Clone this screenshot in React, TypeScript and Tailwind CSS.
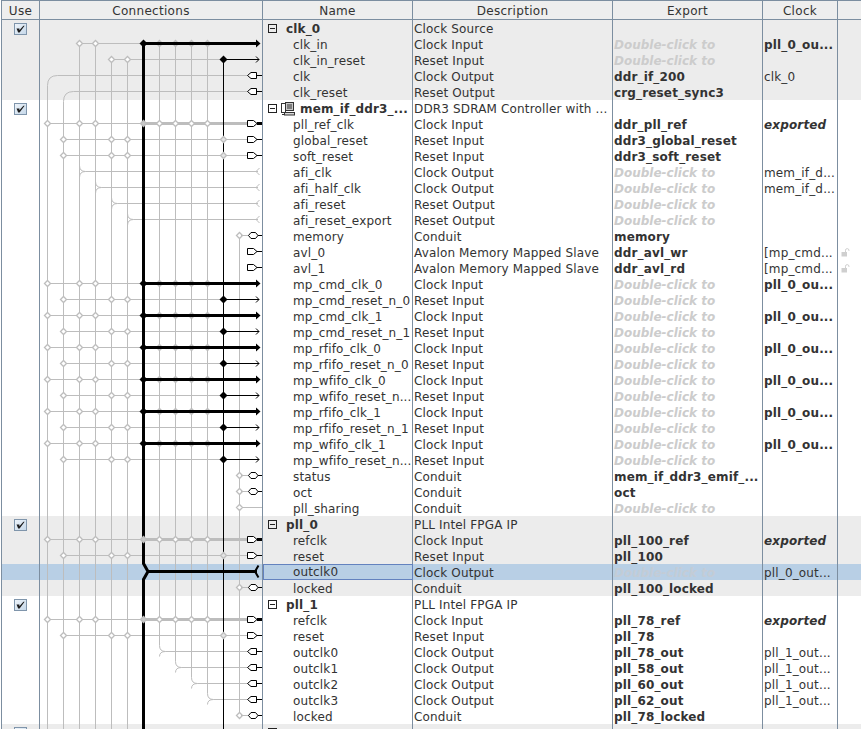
import React from "react";

type Row = {
  name: string;
  kind?: "group" | "mem";
  desc: string;
  exp?: string;
  clock?: string;
  clockStyle?: "b" | "x";
  lock?: boolean;
};

const DC = "@";
const P0 = "pll_0_ou...";

const clkIn = (name: string): Row => ({ name, desc: "Clock Input", exp: DC, clock: P0, clockStyle: "b" });
const rstIn = (name: string): Row => ({ name, desc: "Reset Input", exp: DC });

const rows: Row[] = [
  { name: "clk_0", kind: "group", desc: "Clock Source" },
  clkIn("clk_in"),
  rstIn("clk_in_reset"),
  { name: "clk", desc: "Clock Output", exp: "ddr_if_200", clock: "clk_0" },
  { name: "clk_reset", desc: "Reset Output", exp: "crg_reset_sync3" },
  { name: "mem_if_ddr3_...", kind: "mem", desc: "DDR3 SDRAM Controller with ..." },
  { name: "pll_ref_clk", desc: "Clock Input", exp: "ddr_pll_ref", clock: "exported", clockStyle: "x" },
  { name: "global_reset", desc: "Reset Input", exp: "ddr3_global_reset" },
  { name: "soft_reset", desc: "Reset Input", exp: "ddr3_soft_reset" },
  { name: "afi_clk", desc: "Clock Output", exp: DC, clock: "mem_if_d..." },
  { name: "afi_half_clk", desc: "Clock Output", exp: DC, clock: "mem_if_d..." },
  { name: "afi_reset", desc: "Reset Output", exp: DC },
  { name: "afi_reset_export", desc: "Reset Output", exp: DC },
  { name: "memory", desc: "Conduit", exp: "memory" },
  { name: "avl_0", desc: "Avalon Memory Mapped Slave", exp: "ddr_avl_wr", clock: "[mp_cmd...", lock: true },
  { name: "avl_1", desc: "Avalon Memory Mapped Slave", exp: "ddr_avl_rd", clock: "[mp_cmd...", lock: true },
  clkIn("mp_cmd_clk_0"),
  rstIn("mp_cmd_reset_n_0"),
  clkIn("mp_cmd_clk_1"),
  rstIn("mp_cmd_reset_n_1"),
  clkIn("mp_rfifo_clk_0"),
  rstIn("mp_rfifo_reset_n_0"),
  clkIn("mp_wfifo_clk_0"),
  rstIn("mp_wfifo_reset_n..."),
  clkIn("mp_rfifo_clk_1"),
  rstIn("mp_rfifo_reset_n_1"),
  clkIn("mp_wfifo_clk_1"),
  rstIn("mp_wfifo_reset_n..."),
  { name: "status", desc: "Conduit", exp: "mem_if_ddr3_emif_..." },
  { name: "oct", desc: "Conduit", exp: "oct" },
  { name: "pll_sharing", desc: "Conduit", exp: DC },
  { name: "pll_0", kind: "group", desc: "PLL Intel FPGA IP" },
  { name: "refclk", desc: "Clock Input", exp: "pll_100_ref", clock: "exported", clockStyle: "x" },
  { name: "reset", desc: "Reset Input", exp: "pll_100" },
  { name: "outclk0", desc: "Clock Output", exp: DC, clock: "pll_0_out..." },
  { name: "locked", desc: "Conduit", exp: "pll_100_locked" },
  { name: "pll_1", kind: "group", desc: "PLL Intel FPGA IP" },
  { name: "refclk", desc: "Clock Input", exp: "pll_78_ref", clock: "exported", clockStyle: "x" },
  { name: "reset", desc: "Reset Input", exp: "pll_78" },
  { name: "outclk0", desc: "Clock Output", exp: "pll_78_out", clock: "pll_1_out..." },
  { name: "outclk1", desc: "Clock Output", exp: "pll_58_out", clock: "pll_1_out..." },
  { name: "outclk2", desc: "Clock Output", exp: "pll_60_out", clock: "pll_1_out..." },
  { name: "outclk3", desc: "Clock Output", exp: "pll_62_out", clock: "pll_1_out..." },
  { name: "locked", desc: "Conduit", exp: "pll_78_locked" },
  { name: "", kind: "group", desc: "" },
];

const SELECTED = 34;
const isGrey = (i: number) => i <= 4 || (i >= 31 && i <= 35) || i >= 44;
const Y = (i: number) => 27.5 + 16 * i;

const GREY = "#bdbdbd";
const CLK_X = [47.5, 79.5, 95.5];
const RST_X = [63.5, 111.5, 127.5];
const OUT_X = [159.5, 175.5, 191.5, 207.5];

function Diamond({ x, y, fill = "#ffffff" }: { x: number; y: number; fill?: string }) {
  return (
    <polygon
      points={`${x - 3},${y} ${x},${y - 3} ${x + 3},${y} ${x},${y + 3}`}
      fill={fill}
      stroke={GREY}
      strokeWidth={1.3}
    />
  );
}

function Dot({ x, y }: { x: number; y: number }) {
  return <polygon points={`${x - 4},${y} ${x},${y - 4} ${x + 4},${y} ${x},${y + 4}`} fill="#000000" />;
}

function PortIn({ y, thick }: { y: number; thick?: boolean }) {
  return (
    <g>
      <line x1={257} y1={y} x2={262} y2={y} stroke="#000000" strokeWidth={thick ? 3 : 1} />
      <polygon
        points={`247.5,${y - 3} 253.5,${y - 3} 257,${y} 253.5,${y + 3} 247.5,${y + 3}`}
        fill="#ffffff"
        stroke="#000000"
      />
    </g>
  );
}

function PortOut({ y }: { y: number }) {
  return (
    <g>
      <line x1={257} y1={y} x2={262} y2={y} stroke="#000000" />
      <polygon
        points={`247.5,${y} 251,${y - 3} 256.5,${y - 3} 256.5,${y + 3} 251,${y + 3}`}
        fill="#ffffff"
        stroke="#000000"
      />
    </g>
  );
}

function PortConduit({ y }: { y: number }) {
  return (
    <g>
      <line x1={241} y1={y} x2={249} y2={y} stroke={GREY} />
      <line x1={257} y1={y} x2={262} y2={y} stroke="#000000" />
      <polygon
        points={`248.5,${y} 251,${y - 3} 255.5,${y - 3} 258,${y} 255.5,${y + 3} 251,${y + 3}`}
        fill="#ffffff"
        stroke="#000000"
      />
    </g>
  );
}

function Wires() {
  const clkRows = [16, 18, 20, 22, 24, 26].map(Y);
  const rstRows = [17, 19, 21, 23, 25, 27].map(Y);
  const inClk = [Y(6), Y(32), Y(37)];
  const inRst = [Y(7), Y(8), Y(33), Y(38)];
  const branches: [number, number][] = [
    [79.5, Y(9)],
    [95.5, Y(10)],
    [111.5, Y(11)],
    [127.5, Y(12)],
  ];
  const endBranches: [number, number][] = [
    [159.5, Y(39)],
    [175.5, Y(40)],
    [191.5, Y(41)],
    [207.5, Y(42)],
  ];
  const sel = Y(SELECTED);
  return (
    <svg
      width={263}
      height={729}
      viewBox="0 0 263 729"
      className="absolute left-0 top-0 pointer-events-none"
      fill="none"
    >
      <g stroke={GREY} strokeWidth={1}>
        <path d={`M47.5 729V${Y(3) + 10}Q47.5 ${Y(3)} 57.5 ${Y(3)}H248`} />
        <path d={`M63.5 729V${Y(4) + 10}Q63.5 ${Y(4)} 73.5 ${Y(4)}H248`} />
        {[79.5, 95.5].map((x) => (
          <line key={x} x1={x} y1={Y(1)} x2={x} y2={729} />
        ))}
        {[111.5, 127.5].map((x) => (
          <line key={x} x1={x} y1={Y(2)} x2={x} y2={729} />
        ))}
        {endBranches.map(([x, y]) => (
          <path
            key={x}
            d={`M${x} ${Y(1)}V${y - 6}Q${x} ${y} ${x + 6} ${y}Q${x} ${y} ${x} ${y + 5}M${x + 6} ${y}H248`}
          />
        ))}
        <line x1={239.5} y1={Y(13)} x2={239.5} y2={Y(43)} />

        {branches.map(([x, y]) => (
          <path
            key={y}
            d={`M${x} ${y - 6}Q${x} ${y} ${x + 6} ${y}Q${x} ${y} ${x} ${y + 6}M${x + 6} ${y}H258M259.5 ${y - 3.5}L256 ${y}L259.5 ${y + 3.5}`}
          />
        ))}

        <line x1={79.5} y1={Y(1)} x2={143.5} y2={Y(1)} />
        <line x1={111.5} y1={Y(2)} x2={223.5} y2={Y(2)} />

        {clkRows.map((y) => (
          <line key={y} x1={47.5} y1={y} x2={143.5} y2={y} />
        ))}
        {rstRows.map((y) => (
          <line key={y} x1={63.5} y1={y} x2={223.5} y2={y} />
        ))}
        {inClk.map((y) => (
          <g key={y}>
            <line x1={47.5} y1={y} x2={143.5} y2={y} />
            <line x1={143.5} y1={y} x2={248} y2={y} strokeWidth={3} />
          </g>
        ))}
        {inRst.map((y) => (
          <line key={y} x1={63.5} y1={y} x2={248} y2={y} />
        ))}
        <line x1={239.5} y1={Y(30)} x2={262} y2={Y(30)} />
      </g>

      {[79.5, 95.5].map((x) => (
        <Diamond key={x} x={x} y={Y(1)} />
      ))}
      {[111.5, 127.5].map((x) => (
        <Diamond key={x} x={x} y={Y(2)} />
      ))}
      {[Y(1), ...clkRows].map((y) =>
        OUT_X.map((x) => <Diamond key={`${x}-${y}`} x={x} y={y} fill="#d8d8d8" />),
      )}
      {clkRows.map((y) => CLK_X.map((x) => <Diamond key={`${x}-${y}`} x={x} y={y} />))}
      {rstRows.map((y) => RST_X.map((x) => <Diamond key={`${x}-${y}`} x={x} y={y} />))}
      {inClk.map((y) => [...CLK_X, ...OUT_X].map((x) => <Diamond key={`${x}-${y}`} x={x} y={y} />))}
      {inRst.map((y) => RST_X.map((x) => <Diamond key={`${x}-${y}`} x={x} y={y} />))}
      {[13, 28, 29, 30, 35, 43].map((i) => (
        <Diamond key={i} x={239.5} y={Y(i)} />
      ))}

      <g stroke="#000000">
        <path d={`M143.5 ${Y(1)}V${sel - 8}L148 ${sel}L143.5 ${sel + 8}V729`} strokeWidth={3} />
        <line x1={223.5} y1={Y(2)} x2={223.5} y2={729} />
        <line x1={147} y1={sel} x2={257} y2={sel} strokeWidth={3} />
        <path d={`M258.5 ${sel - 6}L255 ${sel}L258.5 ${sel + 6}`} strokeWidth={2} />
        {[Y(1), ...clkRows].map((y) => (
          <g key={y}>
            <line x1={143.5} y1={y} x2={257} y2={y} strokeWidth={3} />
            <polygon points={`256,${y - 4} 260.5,${y} 256,${y + 4}`} fill="#000000" stroke="none" />
          </g>
        ))}
        {[Y(2), ...rstRows].map((y) => (
          <g key={y}>
            <line x1={223.5} y1={y} x2={259} y2={y} />
            <path d={`M256 ${y - 3}L259 ${y}L256 ${y + 3}`} />
          </g>
        ))}
      </g>
      {[Y(1), ...clkRows].map((y) => (
        <Dot key={y} x={143.5} y={y} />
      ))}
      {[Y(2), ...rstRows].map((y) => (
        <Dot key={y} x={223.5} y={y} />
      ))}

      {inClk.map((y) => (
        <Diamond key={y} x={143.5} y={y} fill="#c8c8c8" />
      ))}
      {inRst.map((y) => (
        <Diamond key={y} x={223.5} y={y} fill="#e4e4e4" />
      ))}

      {inClk.map((y) => (
        <PortIn key={y} y={y} thick />
      ))}
      {[...inRst, Y(14), Y(15)].map((y) => (
        <PortIn key={y} y={y} />
      ))}
      {[3, 4, 39, 40, 41, 42].map((i) => (
        <PortOut key={i} y={Y(i)} />
      ))}
      {[13, 28, 29, 35, 43].map((i) => (
        <PortConduit key={i} y={Y(i)} />
      ))}
    </svg>
  );
}

function Check() {
  return (
    <span className="flex h-[12px] w-[13px] items-center justify-center border border-[#7f95ab] bg-gradient-to-br from-[#eef4fa] to-[#c6d8e9]">
      <svg width={9} height={8} viewBox="0 0 9 8">
        <path d="M0.5 3.6H3.4V5.2L7.4 0.8H8.6L3.6 7.6H2.2Z" fill="#1c1c1c" />
      </svg>
    </span>
  );
}

function Minus() {
  return (
    <span className="flex h-[9px] w-[9px] shrink-0 items-center justify-center border border-[#222222] bg-transparent">
      <span className="h-[1px] w-[5px] bg-[#222222]" />
    </span>
  );
}

function CompIcon() {
  return (
    <svg width={15} height={14} viewBox="0 0 15 14" className="shrink-0">
      <rect x={0.5} y={1.5} width={4} height={9} fill="#ffffff" stroke="#333333" />
      <rect x={4.5} y={0.5} width={8} height={8} fill="#c8c8c8" stroke="#333333" />
      <rect x={6} y={2} width={5} height={5} fill="#7d7d7d" />
      <rect x={3.5} y={10.5} width={10} height={2.5} fill="#d8d8d8" stroke="#333333" />
      <rect x={1} y={12} width={3} height={1} fill="#333333" />
    </svg>
  );
}

function Lock() {
  return (
    <svg width={9} height={9} viewBox="0 0 9 9">
      <path d="M4.5 4V2.2Q4.5 0.6 6.2 0.6Q7.9 0.6 7.9 2.2V3" fill="none" stroke="#d0d0d0" />
      <rect x={0.5} y={4} width={5.5} height={4.5} fill="#cfcfcf" />
    </svg>
  );
}

function ExportText({ value, selected }: { value?: string; selected: boolean }) {
  if (!value) return null;
  if (value === DC)
    return (
      <span className={`font-bold italic tracking-normal ${selected ? "text-[#c3ccd6]" : "text-[#cccccc]"}`}>
        Double-click to
      </span>
    );
  return <span className="font-bold">{value}</span>;
}

function ClockText({ row }: { row: Row }) {
  if (!row.clock) return null;
  if (row.clockStyle === "b") return <span className="font-bold">{row.clock}</span>;
  if (row.clockStyle === "x") return <span className="font-bold italic">{row.clock}</span>;
  return <span>{row.clock}</span>;
}

const border = "border-r border-[#7c8ea0]";

export default function App() {
  return (
    <div className="relative h-[729px] w-[861px] overflow-hidden bg-white pl-[1px] font-['DejaVu_Sans',sans-serif] text-[12px] leading-[16px] tracking-[0.15px] text-[#333333]">
      <div className="flex h-[20px] border-y border-[#7c8ea0] bg-[#eeeeee] text-center tracking-[0.3px]">
        <div className={`w-[39px] border-l pt-[2px] ${border}`}>Use</div>
        <div className={`w-[223px] pt-[2px] ${border}`}>Connections</div>
        <div className={`w-[150px] pt-[2px] ${border}`}>Name</div>
        <div className={`w-[200px] pt-[2px] ${border}`}>Description</div>
        <div className={`w-[150px] pt-[2px] ${border}`}>Export</div>
        <div className={`w-[75px] pt-[2px] ${border}`}>Clock</div>
        <div className="flex-1" />
      </div>
      {rows.map((r, i) => {
        const selected = i === SELECTED;
        const bg = selected ? "bg-[#b8cfe5]" : isGrey(i) ? "bg-[#ececec]" : "bg-white";
        const group = r.kind === "group" || r.kind === "mem";
        return (
          <div key={i} className={`flex h-[16px] whitespace-nowrap ${bg}`}>
            <div className={`flex w-[39px] items-start justify-center border-l pt-[3px] ${border}`}>
              {group && <Check />}
            </div>
            <div className={`w-[223px] ${border}`} />
            <div
              className={`flex w-[150px] items-center overflow-hidden ${
                selected ? "border border-[#6382bf]" : `pt-[1px] ${border}`
              } ${group ? "pl-[5px]" : selected ? "pl-[29px]" : "pl-[30px]"}`}
            >
              {r.kind === "group" && (
                <>
                  <Minus />
                  {r.name && <span className="ml-[9px] font-bold">{r.name}</span>}
                </>
              )}
              {r.kind === "mem" && (
                <>
                  <Minus />
                  <span className="ml-[4px]">
                    <CompIcon />
                  </span>
                  <span className="ml-[4px] font-bold">{r.name}</span>
                </>
              )}
              {!group && r.name}
            </div>
            <div className={`w-[200px] overflow-hidden pl-[1px] pt-[1px] ${border}`}>{r.desc}</div>
            <div className={`w-[150px] overflow-hidden pl-[1px] pt-[1px] ${border}`}>
              <ExportText value={r.exp} selected={selected} />
            </div>
            <div className={`w-[75px] overflow-hidden pl-[1px] pt-[1px] ${border}`}>
              <ClockText row={r} />
            </div>
            <div className="flex flex-1 items-center pl-[3px]">{r.lock && <Lock />}</div>
          </div>
        );
      })}
      <Wires />
    </div>
  );
}
